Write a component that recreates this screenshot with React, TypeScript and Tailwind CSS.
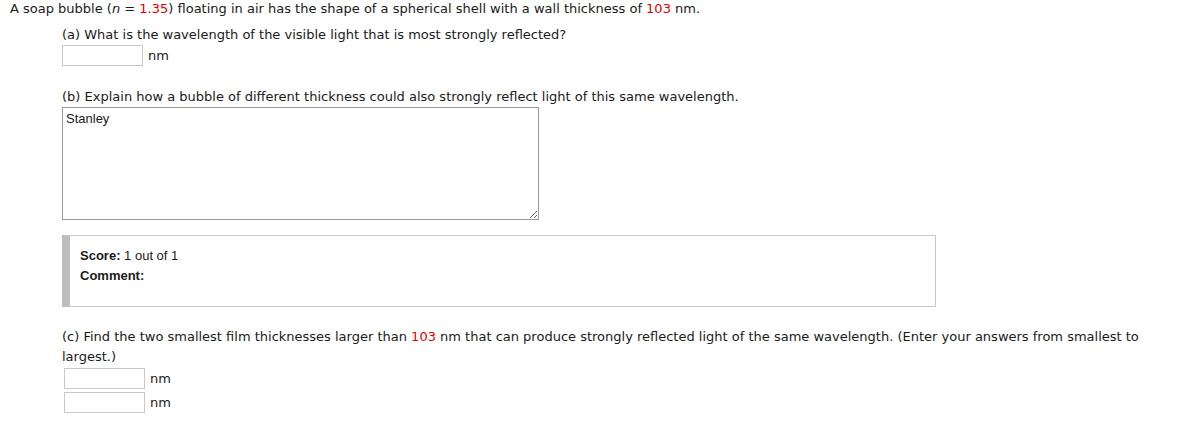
const Red = ({ children }: { children: React.ReactNode }) => (
  <span className="text-[#e00000]">{children}</span>
);

const NumInput = ({ className = "" }: { className?: string }) => (
  <div className={`flex items-center ${className}`}>
    <input
      type="text"
      className="w-[81px] h-[21px] border border-[#c8c8c8] bg-white outline-none"
    />
    <span className="ml-[5px]">nm</span>
  </div>
);

export default function App() {
  return (
    <div
      className="min-h-screen bg-white text-[13px] text-[#1a1a1a] pl-[10px] pr-[20px]"
      style={{ fontFamily: 'Verdana, "DejaVu Sans", sans-serif' }}
    >
      <p className="leading-[18px]">
        A soap bubble (<i>n</i> = <Red>1.35</Red>) floating in air has the shape of a spherical shell with a wall
        thickness of <Red>103</Red> nm.
      </p>

      <div className="ml-[52px]">
        <p className="mt-[7px] leading-[20px]">(a) What is the wavelength of the visible light that is most strongly reflected?</p>
        <NumInput />

        <p className="mt-[21px] leading-[20px]">
          (b) Explain how a bubble of different thickness could also strongly reflect light of this same wavelength.
        </p>
        <textarea
          defaultValue="Stanley"
          className="block w-[477px] h-[113px] border border-[#999] px-[3px] py-[1px] text-[13px] text-[#1a1a1a] outline-none"
          style={{ fontFamily: '"Liberation Sans", Arial, sans-serif' }}
        />

        <div
          className="mt-[15px] w-[874px] h-[72px] border border-[#c8c8c8] border-l-[8px] border-l-[#bdbdbd] pl-[10px] pt-[10px] text-[13px] text-[#1a1a1a] leading-[20px]"
          style={{ fontFamily: '"Liberation Sans", Arial, sans-serif' }}
        >
          <p>
            <b>Score:</b> 1 out of 1
          </p>
          <p>
            <b>Comment:</b>
          </p>
        </div>

        <p className="mt-[20px] leading-[20px]">
          (c) Find the two smallest film thicknesses larger than <Red>103</Red> nm that can produce strongly reflected
          light of the same wavelength. (Enter your answers from smallest to largest.)
        </p>
        <div className="ml-[2px] mt-[1px]">
          <NumInput />
          <NumInput className="mt-[3px]" />
        </div>
      </div>
    </div>
  );
}
